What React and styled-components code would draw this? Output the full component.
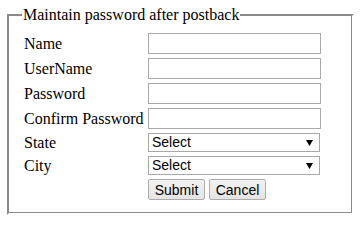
import styled, { createGlobalStyle } from "styled-components";

const GlobalStyle = createGlobalStyle`
  html, body {
    margin: 0;
    padding: 0;
    background: #ffffff;
  }
  body {
    font-family: "Liberation Serif", "Times New Roman", serif;
    font-size: 16px;
    color: #000;
  }
`;

const Fieldset = styled.fieldset`
  box-sizing: border-box;
  width: 347px;
  height: 209px;
  margin: 6px 0 0 7px;
  padding: 5px 10px 10px 15px;
  border: 2px solid;
  border-color: #8a8a8a #ffffff #ffffff #8a8a8a;
  box-shadow: inset -1px -1px 0 #8a8a8a, 1px 1px 0 #ffffff;
  min-width: 0;
`;

const Legend = styled.legend`
  margin-left: -2px;
  padding: 0 1px;
  font-size: 16px;
  line-height: 18px;
`;

const FormGrid = styled.div`
  display: grid;
  grid-template-columns: 124px 173px;
  row-gap: 4px;
  align-items: center;
  margin-top: 4px;
`;

const Label = styled.label`
  font-size: 16px;
  line-height: 18px;
  white-space: nowrap;
`;

const TextBox = styled.input`
  box-sizing: border-box;
  width: 173px;
  height: 21px;
  margin: 0;
  border: 1px solid #a9a9a9;
  background: #fff;
  font-family: "Liberation Sans", Arial, sans-serif;
  font-size: 13px;
  padding: 0 3px;
  outline: none;
`;

const SelectBox = styled.select`
  box-sizing: border-box;
  width: 172px;
  height: 19px;
  margin: 0;
  border: 1px solid #a9a9a9;
  border-radius: 0;
  background-color: #fff;
  background-image: url("data:image/svg+xml;utf8,<svg xmlns='http://www.w3.org/2000/svg' width='7' height='6'><path d='M0 0h7L3.5 6z' fill='black'/></svg>");
  background-repeat: no-repeat;
  background-position: right 6px center;
  appearance: none;
  -webkit-appearance: none;
  font-family: "Liberation Sans", Arial, sans-serif;
  font-size: 14px;
  color: #000;
  padding: 0 0 0 3px;
  line-height: 17px;
  outline: none;
`;

const ButtonRow = styled.div`
  display: flex;
  gap: 4px;
`;

const Button = styled.button`
  box-sizing: border-box;
  width: 57px;
  height: 21px;
  margin: 0;
  padding: 0;
  border: 1px solid #acacac;
  border-radius: 2px;
  background: linear-gradient(#f2f2f2, #e4e4e4);
  font-family: "Liberation Sans", Arial, sans-serif;
  font-size: 14px;
  color: #000;
`;

export default function App() {
  return (
    <>
      <GlobalStyle />
      <Fieldset>
        <Legend>Maintain password after postback</Legend>
        <FormGrid>
          <Label>Name</Label>
          <TextBox type="text" />
          <Label>UserName</Label>
          <TextBox type="text" />
          <Label>Password</Label>
          <TextBox type="password" />
          <Label>Confirm Password</Label>
          <TextBox type="password" />
          <Label>State</Label>
          <SelectBox defaultValue="">
            <option value="">Select</option>
          </SelectBox>
          <Label>City</Label>
          <SelectBox defaultValue="">
            <option value="">Select</option>
          </SelectBox>
          <span />
          <ButtonRow>
            <Button type="button">Submit</Button>
            <Button type="button">Cancel</Button>
          </ButtonRow>
        </FormGrid>
      </Fieldset>
    </>
  );
}
